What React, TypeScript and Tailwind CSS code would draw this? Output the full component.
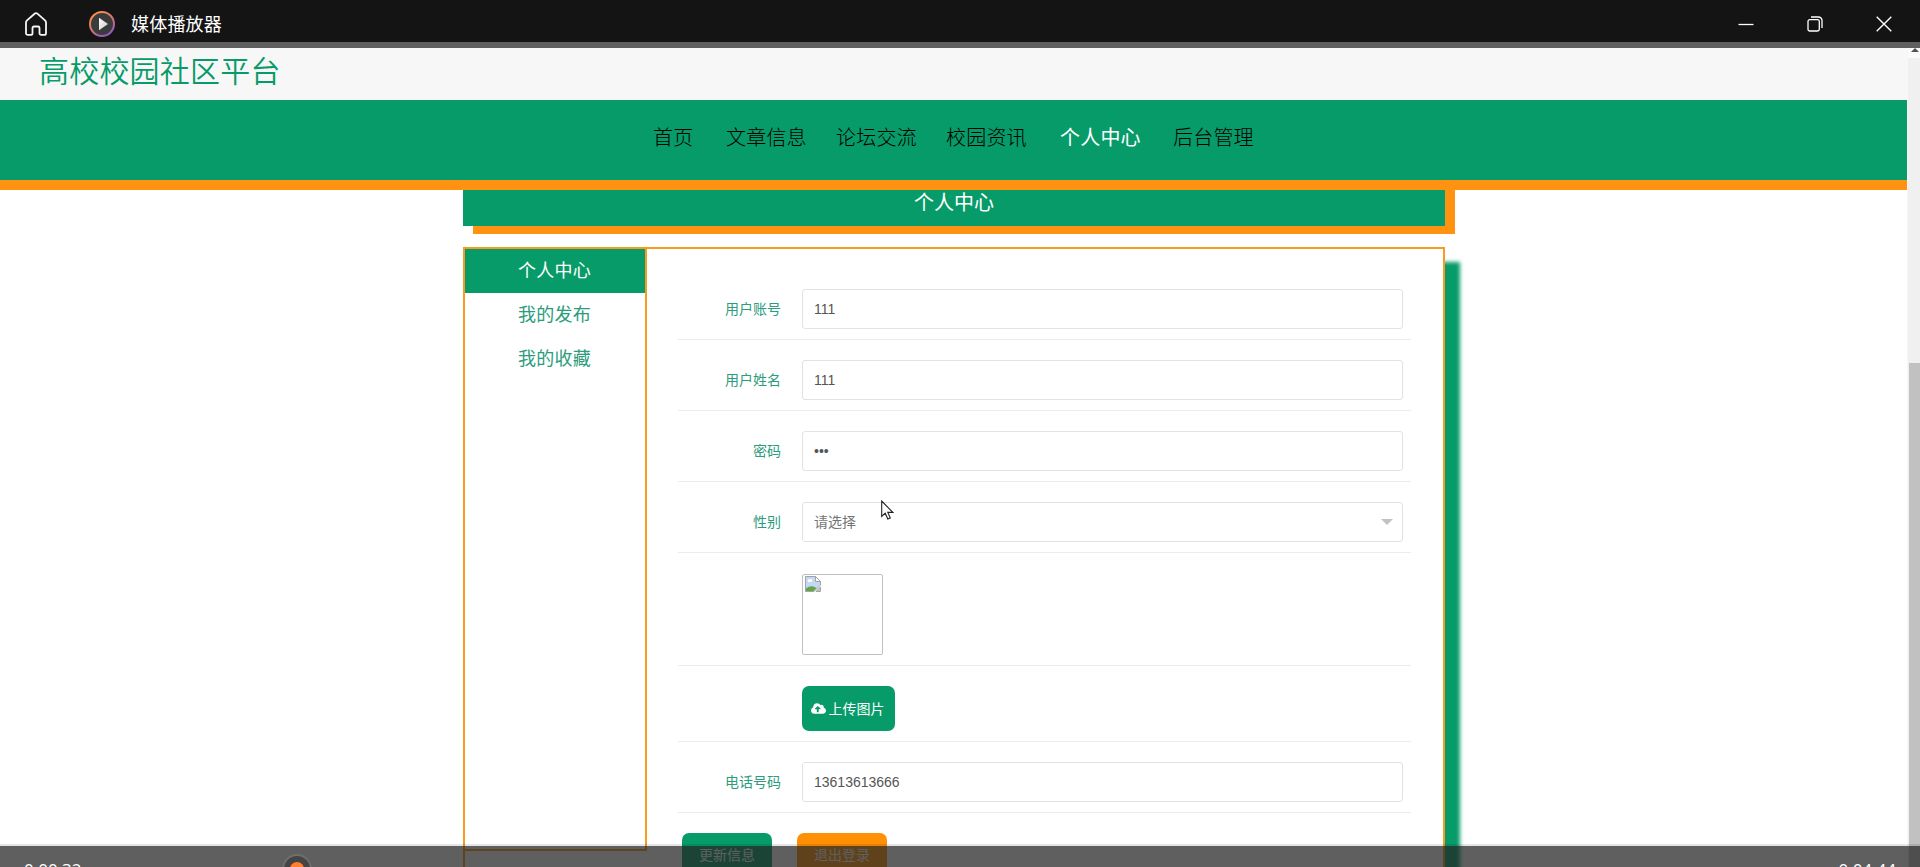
import React from "react";
import { useState } from "react";
import { FaCloudUploadAlt } from "react-icons/fa";

const navItems = [
    { name: "首页", width: "w-[73px]" },
    { name: "文章信息", width: "w-[110px]" },
    { name: "论坛交流", width: "w-[110px]" },
    { name: "校园资讯", width: "w-[114px]" },
    { name: "个人中心", width: "w-[113px]" },
    { name: "后台管理", width: "w-[82px]" },
];

const sideItems = ["个人中心", "我的发布", "我的收藏"];

function TitleBar() {
    return (
        <header className="flex h-[48px] shrink-0 items-center border-b-[6px] border-[#5f5f5f] bg-[#141414] pl-[24px] pr-[28px] text-white">
            <svg className="mt-[5px]" width="24" height="26" viewBox="0 0 24 26" fill="none" stroke="#f5f5f5" strokeWidth="1.8" strokeLinejoin="round">
                <path d="M2 11.6c0-.9.4-1.6 1-2.2l7.6-6.7a2.1 2.1 0 0 1 2.8 0L21 9.4c.6.6 1 1.3 1 2.2v10.600c0 .9-.7 1.700-1.700 1.700h-3.100c-.9 0-1.700-.8-1.700-1.700V17c0-.8-.6-1.500-1.500-1.500h-4c-.9 0-1.500.7-1.500 1.500v5.200c0 .9-.8 1.700-1.700 1.700H3.700c-1 0-1.700-.8-1.700-1.700z" />
            </svg>
            <svg className="ml-[41px] mt-[6px]" width="26" height="26" viewBox="0 0 26 26">
                <defs>
                    <linearGradient id="ring" x1="0.2" y1="0" x2="0.8" y2="1">
                        <stop offset="0" stopColor="#ff9445" />
                        <stop offset="0.5" stopColor="#d0757a" />
                        <stop offset="1" stopColor="#8a55cf" />
                    </linearGradient>
                    <linearGradient id="play" x1="0" y1="0" x2="1" y2="1">
                        <stop offset="0" stopColor="#ffffff" />
                        <stop offset="1" stopColor="#c8c8c8" />
                    </linearGradient>
                </defs>
                <circle cx="13" cy="13" r="12" fill="#3b3b3b" stroke="url(#ring)" strokeWidth="2" />
                <path d="M10 6.800v12.400l9-6.200z" fill="url(#play)" />
            </svg>
            <span className="ml-[16px] mt-[8px] text-[18px] leading-[26px] tracking-[0.2px]">媒体播放器</span>
            <div className="ml-auto mt-[5px] flex items-center gap-[53px]">
                <svg width="16" height="16" viewBox="0 0 16 16" stroke="#fff" strokeWidth="1.300">
                    <path d="M.5 8.500h15" />
                </svg>
                <svg width="16" height="16" viewBox="0 0 16 16" fill="none" stroke="#fff" strokeWidth="1.300">
                    <rect x="1" y="3.700" width="11.300" height="11.300" rx="1.800" />
                    <path d="M4 1h7.500A3.500 3.500 0 0 1 15 4.500V12" />
                </svg>
                <svg width="16" height="16" viewBox="0 0 16 16" stroke="#fff" strokeWidth="1.400">
                    <path d="M.7.7l14.600 14.600M15.300.7L.7 15.300" />
                </svg>
            </div>
        </header>
    );
}

function Row({ label, children }: { label?: string; children: React.ReactNode }) {
    return (
        <div className="flex items-center border-b border-[#ececec] pb-[10px] pt-5">
            <label className="w-[103px] shrink-0 text-right text-sm text-[#2b9c7c]">{label}</label>
            <div className="ml-[21px] w-[601px]">{children}</div>
        </div>
    );
}

const inputClass = "block h-10 w-full rounded-[3px] border border-[#e2e2e2] bg-white px-[11px] pb-px text-sm text-[#555] outline-none";

function ProfileForm() {
    const [form, setForm] = useState({
        account: "111",
        name: "111",
        password: "111",
        phone: "13613613666",
    });

    const handleChange = (e: React.ChangeEvent<HTMLInputElement>) => {
        const { name, value } = e.target;
        setForm({ ...form, [name]: value });
    }

    return (
        <form className="ml-[31px] w-[733px] pt-[20px]">
            <Row label="用户账号">
                <input name="account" className={inputClass} onChange={handleChange} value={form.account} />
            </Row>
            <Row label="用户姓名">
                <input name="name" className={inputClass} onChange={handleChange} value={form.name} />
            </Row>
            <Row label="密码">
                <input type="password" name="password" className={inputClass} onChange={handleChange} value={form.password} />
            </Row>
            <Row label="性别">
                <div className="flex h-10 items-center justify-between rounded-[3px] border border-[#e2e2e2] pl-[11px] pr-[9px] text-sm text-[#757575]">
                    <span>请选择</span>
                    <span className="border-x-[6px] border-t-[6px] border-x-transparent border-t-[#c2c2c2]"></span>
                </div>
            </Row>
            <Row>
                <div className="mt-px h-[81px] w-[81px] rounded-[2px] border border-[#c0c0c0] pl-[2px] pt-px">
                    <svg width="16" height="16" viewBox="0 0 16 16">
                        <path d="M.5.5h10l5 5V9l-6.500 6.500H.5z" fill="#c4d7f5" stroke="#a3a3a3" />
                        <path d="M10.500.5v5h5z" fill="#fff" stroke="#a3a3a3" />
                        <ellipse cx="5" cy="4.500" rx="2.500" ry="1.500" fill="#fff" />
                        <path d="M1 15v-2.500c3-2.500 6-3 8.500-1.500l2 1-3 3z" fill="#63a547" />
                        <path d="M15.500 11v4.500H11z" fill="#b5cfa8" stroke="#a3a3a3" />
                    </svg>
                </div>
            </Row>
            <Row>
                <button type="button" className="flex h-[45px] w-[93px] items-center justify-center gap-[3px] rounded-[7px] bg-[#079b69] pr-[2px] text-sm text-white">
                    <FaCloudUploadAlt size={15} />
                    上传图片
                </button>
            </Row>
            <Row label="电话号码">
                <input name="phone" className={inputClass} onChange={handleChange} value={form.phone} />
            </Row>
            <div className="flex gap-[25px] pl-[4px] pt-[20px] text-sm text-white">
                <button type="button" className="h-[45px] w-[90px] rounded-[7px] bg-[#079b69] pb-px">更新信息</button>
                <button type="button" className="h-[45px] w-[90px] rounded-[7px] bg-[#ff9005] pb-px">退出登录</button>
            </div>
        </form>
    );
}

function Scrollbar() {
    return (
        <div className="flex w-[13px] shrink-0 flex-col border-l border-[#f7f7f7] bg-[#f0f0f0]">
            <div className="flex h-[10px] shrink-0 justify-end bg-[#fafafa] pr-[1px]">
                <span className="h-0 border-x-4 border-b-[4px] border-x-transparent border-b-[#505050]"></span>
            </div>
            <div className="ml-px mt-[305px] flex-1 bg-[#c1c1c1]"></div>
        </div>
    );
}

export default function App() {
    const [active, setActive] = useState("个人中心");

    return (
        <div className="relative flex h-[867px] w-[1920px] flex-col overflow-hidden bg-white font-['Liberation_Sans','Noto_Sans_CJK_SC',sans-serif]">
            <TitleBar />
            <div className="flex min-h-0 flex-1">
                <div className="flex w-[1907px] flex-col overflow-hidden">
                    <div className="h-[52px] shrink-0 bg-[#f7f7f7] pl-[39px] text-[30px] font-[350] leading-[47px] tracking-[0.2px] text-[#079b69]">高校校园社区平台</div>
                    <nav className="z-10 flex h-[90px] shrink-0 border-b-[10px] border-[#ff9311] bg-[#079b69] pl-[653px] text-xl font-light leading-[77px] tracking-[0.2px]">
                        {navItems.map((item) => (
                            <a key={item.name} className={`${item.width} ${item.name === "个人中心" ? "font-normal text-white" : "text-black"}`}>{item.name}</a>
                        ))}
                    </nav>
                    {/* heading is scrolled halfway under the nav */}
                    <div className="-mt-[24px] ml-[463px] h-[60px] w-[982px] shrink-0 bg-[#079b69] pt-[24px] text-center text-xl leading-[26px] text-white shadow-[10px_8px_0_#ff9311]">个人中心</div>
                    <div className="ml-[463px] mt-[21px] flex h-[700px] w-[982px] shrink-0 border-2 border-[#f99b1c] bg-white shadow-[15px_15px_4px_#079b69]">
                        <ul className="h-[602px] w-[182px] shrink-0 border-b-2 border-r-2 border-[#f99b1c] text-center text-lg leading-[44px] tracking-[0.2px]">
                            {sideItems.map((item) => (
                                <li key={item} onClick={() => setActive(item)} className={item === active ? "bg-[#079b69] pr-px text-white" : "pr-px text-[#2b9c7c]"}>{item}</li>
                            ))}
                        </ul>
                        <ProfileForm />
                    </div>
                </div>
                <Scrollbar />
            </div>

            {/* mouse pointer */}
            <svg className="absolute left-[881px] top-[500px]" width="13" height="20" viewBox="0 0 13 20">
                <path d="M.7 1v15.500l3.500-3.300 2.600 5.800 2.500-1.100-2.500-5.500h5z" fill="#fff" stroke="#222" strokeWidth="1.100" />
            </svg>

            {/* player controls, cut off by the window edge */}
            <div className="absolute inset-x-0 top-[844px] h-[2px] bg-black/10"></div>
            <div className="absolute inset-x-0 top-[846px] flex h-[21px] justify-between overflow-hidden bg-[rgba(35,35,35,0.73)] px-[24px] font-['Open_Sans'] text-[17px] leading-[24px] text-white">
                <span className="mt-[12px]">0:00:32</span>
                <span className="mt-[12px]">0:04:44</span>
                <div className="absolute left-[282px] top-[8px] flex h-[30px] w-[30px] items-center justify-center rounded-full border-2 border-[#6e6e6e] bg-[#444]">
                    <span className="h-[14px] w-[14px] rounded-full bg-[#ff8130]"></span>
                </div>
            </div>
        </div>
    )
}
